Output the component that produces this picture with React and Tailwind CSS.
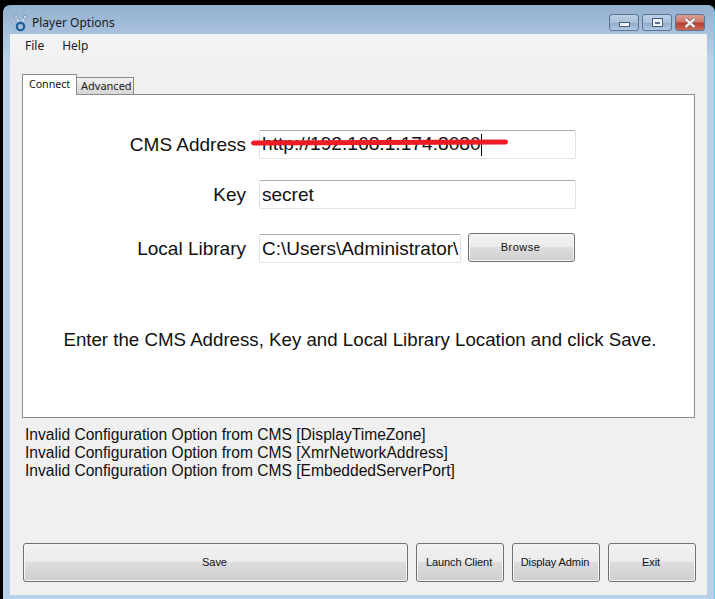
const font = "font-['Liberation_Sans',Arial,sans-serif]";

function WinButton({ className = "", children }) {
  return (
    <button className={`flex items-center justify-center h-[39px] rounded-[3px] border border-[#707070] shadow-[inset_0_0_0_1px_#f6f6f6] bg-[linear-gradient(#f2f2f2_0%,#ebebeb_48%,#dddddd_50%,#cfcfcf_100%)] text-[11px] tracking-[-0.08px] pr-[2px] text-[#111] ${className}`}>
      {children}
    </button>
  );
}

function Field({ label, children, className = "" }) {
  return (
    <div className={`flex items-center ${className}`}>
      <div className="w-[224px] pr-px text-right text-[19px] leading-[20px] text-[#111]">{label}</div>
      <div className="ml-[12px] flex items-center">{children}</div>
    </div>
  );
}

function Input({ value, className = "", caret = false }) {
  return (
    <div className={`h-[29px] flex items-center pl-[2px] rounded-[2px] border border-[#dfe3e8] border-t-[#abadb3] bg-white text-[19px] text-[#111] whitespace-nowrap overflow-hidden ${className}`}>
      <span>{value}</span>
      {caret && <span className="w-px h-[22px] bg-black" />}
    </div>
  );
}

function Caption({ children, className = "" }) {
  return (
    <div className={`h-[17px] rounded-[3px] border border-[#5f7490] flex items-center justify-center ${className}`}>
      {children}
    </div>
  );
}

export default function App() {
  return (
    <div className={`w-[715px] h-[599px] bg-black overflow-hidden pl-[3px] pt-[5px] ${font}`}>
      <div className="w-[712px] h-[594px] rounded-t-[7px] bg-[linear-gradient(#94b0cf_0%,#b9d1ea_9%,#b9d1ea_100%)] border-r border-[#5fd0e8] px-[7px] pb-[4px] flex flex-col">
        <div className="h-[29px] shrink-0 flex items-center relative pt-[6px]">
          <svg width="16" height="18" viewBox="0 0 16 18" className="ml-[3px]">
            <circle cx="3" cy="3" r="1.5" fill="#e8eef5" stroke="#5d7690" strokeWidth="0.6" />
            <circle cx="12" cy="3" r="1.5" fill="#e8eef5" stroke="#5d7690" strokeWidth="0.6" />
            <path d="M4 5 L6 9 M11 5 L9 9" stroke="#dfe8f0" strokeWidth="1" />
            <circle cx="7.5" cy="12.5" r="3.7" fill="none" stroke="#1f5f96" strokeWidth="2.2" />
          </svg>
          <span className="ml-[3px] text-[12px] text-[#1a1a1a] font-['Noto_Sans',sans-serif]">Player Options</span>
          <div className="ml-auto mr-[2px] flex gap-[3px]">
            <Caption className="w-[30px] bg-[linear-gradient(#bcd0e6_0%,#a9c1dc_50%,#8fabca_52%,#b0c8e2_100%)]">
              <div className="w-[11px] h-[5px] mt-[3px] bg-[#eef2f6] border border-[#4b5d73]" />
            </Caption>
            <Caption className="w-[30px] bg-[linear-gradient(#bcd0e6_0%,#a9c1dc_50%,#8fabca_52%,#b0c8e2_100%)]">
              <div className="w-[11px] h-[9px] bg-[#eef2f6] border border-[#4b5d73] flex items-center justify-center">
                <div className="w-[5px] h-[2px] bg-[#5f7490]" />
              </div>
            </Caption>
            <Caption className="w-[30px] border-[#4a2b36] bg-[linear-gradient(#dd9d92_0%,#cf7a6c_48%,#b73c2c_52%,#cc6a57_100%)]">
              <svg width="14" height="10" viewBox="0 0 14 10">
                <path d="M2.5 1 L11.5 9 M11.5 1 L2.5 9" stroke="#4b4b4b" strokeWidth="3.6" />
                <path d="M2.5 1 L11.5 9 M11.5 1 L2.5 9" stroke="#f2f2f2" strokeWidth="2.4" />
              </svg>
            </Caption>
          </div>
        </div>

        <div className="flex-1 min-h-0 bg-[#f0f0f0] flex flex-col">
          <div className="h-[24px] shrink-0 flex items-center gap-[18px] pl-[15px] text-[12px] text-[#1a1a1a] font-['Noto_Sans',sans-serif] bg-[#f2f2f2]">
            <span>File</span>
            <span>Help</span>
          </div>

          <div className="ml-[12px] mt-[17px] flex items-end h-[20px] relative z-10 -mb-px">
            <div className="w-[55px] h-[21px] bg-white border border-b-0 border-[#8c8c8c] text-[10.6px] text-[#111] pl-[6px] pt-[1px] leading-[17px] font-['Noto_Sans',sans-serif]">Connect</div>
            <div className="w-[57px] h-[18px] border border-l-0 border-[#8c8c8c] bg-[linear-gradient(#f2f2f2,#d6d6d6)] text-[11px] text-[#222] pl-[4px] leading-[15px] font-['Noto_Sans',sans-serif]">Advanced</div>
          </div>

          <div className="relative ml-[12px] w-[673px] h-[324px] shrink-0 bg-white border border-[#8c8c8c] pt-[35px]">
            <Field label="CMS Address">
              <Input value="http://192.168.1.174:8080" caret className="w-[317px] !text-[19.2px] border-[#7eb4ea] border-t-[#569de5]" />
            </Field>
            <Field label="Key" className="mt-[21px]">
              <Input value="secret" className="w-[317px] pt-px" />
            </Field>
            <Field label="Local Library" className="mt-[25px]">
              <Input value="C:\Users\Administrator\" className="w-[202px] pt-px" />
              <WinButton className="ml-[7px] w-[107px] !h-[29px] -mt-[2px] !tracking-[0.5px]">Browse</WinButton>
            </Field>
            <div className="mt-[66px] text-center text-[18.7px] leading-[22px] text-[#111] pl-[3px]">
              Enter the CMS Address, Key and Local Library Location and click Save.
            </div>
            <div className="absolute left-[228px] top-[45px] w-[257px] h-[5px] rounded-full bg-[#ed1c24] -rotate-[0.2deg]" />
          </div>

          <div className="ml-[15px] mt-[8px] text-[15.6px] leading-[18px] text-[#111]">
            <div>Invalid Configuration Option from CMS [DisplayTimeZone]</div>
            <div>Invalid Configuration Option from CMS [XmrNetworkAddress]</div>
            <div>Invalid Configuration Option from CMS [EmbeddedServerPort]</div>
          </div>

          <div className="mt-auto mb-[13px] ml-[13px] flex gap-[8px]">
            <WinButton className="w-[385px]">Save</WinButton>
            <WinButton className="w-[88px]">Launch Client</WinButton>
            <WinButton className="w-[88px]">Display Admin</WinButton>
            <WinButton className="w-[88px]">Exit</WinButton>
          </div>
        </div>
      </div>
    </div>
  );
}
